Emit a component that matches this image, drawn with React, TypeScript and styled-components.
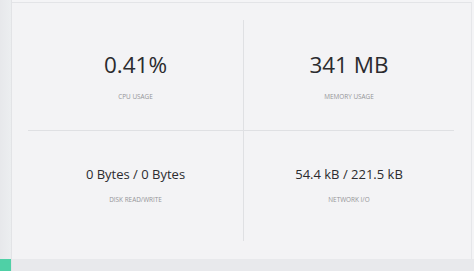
import React from "react";
import styled, { createGlobalStyle } from "styled-components";

const GlobalStyle = createGlobalStyle`
  html, body {
    margin: 0;
    padding: 0;
    background: #f4f4f6;
    font-family: "Open Sans", "Liberation Sans", sans-serif;
  }
`;

const Page = styled.div`
  display: flex;
  width: 474px;
  height: 271px;
  overflow: hidden;
`;

const Sidebar = styled.aside`
  width: 11px;
  display: flex;
  flex-direction: column;
  justify-content: flex-end;
  background: linear-gradient(to right, #e7e8eb, #eceef0);
  border-right: 1px solid #e2e3e6;
`;

const SidebarAccent = styled.div`
  height: 12px;
  background: #4fd0a6;
`;

const Main = styled.main`
  flex: 1;
  display: flex;
  flex-direction: column;
`;

const Panel = styled.section`
  flex: 1;
  margin-top: 2px;
  margin-right: 2px;
  border-top: 1px solid #e3e4e7;
  border-right: 1px solid #e6e7ea;
  background: #f3f3f5;
  padding: 17px 17px 18px 16px;
`;

const Grid = styled.div`
  height: 100%;
  display: grid;
  grid-template-columns: 215px 1fr;
  grid-template-rows: 111px 1fr;
`;

const Cell = styled.div<{ $right?: boolean; $top?: boolean }>`
  display: flex;
  flex-direction: column;
  align-items: center;
  justify-content: center;
  border-left: ${(p) => (p.$right ? "1px solid #dfe0e3" : "none")};
  border-bottom: ${(p) => (p.$top ? "1px solid #dfe0e3" : "none")};
  padding-top: ${(p) => (p.$top ? "2px" : "0")};
  padding-bottom: ${(p) => (p.$top ? "0" : "3px")};
`;

const Value = styled.div<{ $big?: boolean }>`
  color: #2b2b2e;
  font-size: ${(p) => (p.$big ? "22.5px" : "13px")};
  line-height: ${(p) => (p.$big ? "28px" : "18px")};
  margin-bottom: ${(p) => (p.$big ? "14px" : "13px")};
`;

const Label = styled.div`
  color: #939498;
  font-size: 6.4px;
  line-height: 8px;
  text-transform: uppercase;
`;

const BottomBar = styled.div`
  height: 12px;
  background: #e8e9ec;
`;

const stats = [
  { value: "0.41%", label: "CPU Usage", big: true, top: true, right: false },
  { value: "341 MB", label: "Memory Usage", big: true, top: true, right: true },
  { value: "0 Bytes / 0 Bytes", label: "Disk Read/Write", big: false, top: false, right: false },
  { value: "54.4 kB / 221.5 kB", label: "Network I/O", big: false, top: false, right: true },
];

export default function App() {
  return (
    <Page>
      <GlobalStyle />
      <Sidebar>
        <SidebarAccent />
      </Sidebar>
      <Main>
        <Panel>
          <Grid>
            {stats.map((s) => (
              <Cell key={s.label} $top={s.top} $right={s.right}>
                <Value $big={s.big}>{s.value}</Value>
                <Label>{s.label}</Label>
              </Cell>
            ))}
          </Grid>
        </Panel>
        <BottomBar />
      </Main>
    </Page>
  );
}
